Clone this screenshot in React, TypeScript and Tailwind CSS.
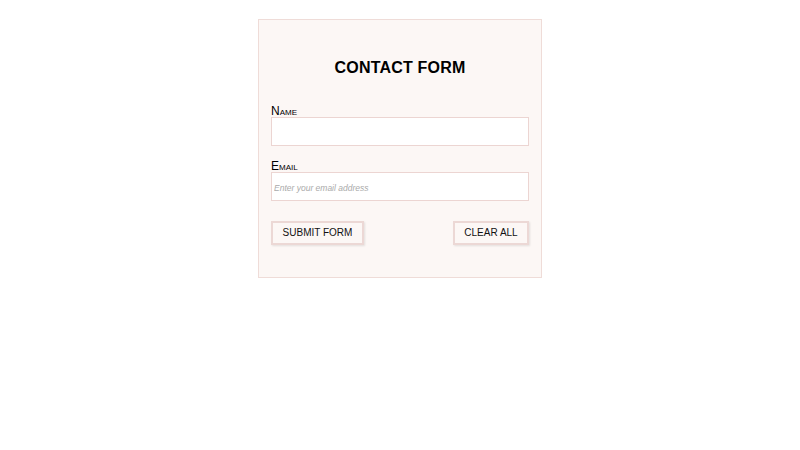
import React, { useState } from 'react';

const App: React.FC = () => {
  const [name, setName] = useState('');
  const [email, setEmail] = useState('');

  const clearAll = () => {
    setName('');
    setEmail('');
  };

  return (
    <div className="min-h-screen w-full bg-white pt-[19px] font-['Liberation_Sans',Arial,sans-serif] text-black">
      <form
        className="mx-auto w-[284px] border border-[#efdcd8] bg-[#fcf7f5] px-[12px] pt-[38px] pb-[32px]"
        onSubmit={(e) => e.preventDefault()}
      >
        {/* Header */}
        <h2 className="text-center text-[16px] leading-[20px] font-bold tracking-[0.2px]">CONTACT FORM</h2>

        {/* Fields */}
        <label className="mt-[26px] block h-[13px] text-[12px] leading-[15px] [font-variant:small-caps]">Name</label>
        <input
          autoFocus
          value={name}
          onChange={(e) => setName(e.target.value)}
          className="block h-[29px] w-full border border-[#ecd5d2] bg-white px-[2px] text-[12px] outline-none"
        />

        <label className="mt-[13px] block h-[13px] text-[12px] leading-[15px] [font-variant:small-caps]">Email</label>
        <input
          type="email"
          value={email}
          onChange={(e) => setEmail(e.target.value)}
          placeholder="Enter your email address"
          className="block h-[29px] w-full border border-[#ecd5d2] bg-white px-[2px] text-[12px] outline-none placeholder:text-[8.5px] placeholder:italic placeholder:text-[#aaaaaa]"
        />

        {/* Actions */}
        <div className="mt-[20px] flex items-center justify-between">
          <button
            type="submit"
            className="h-[24px] w-[93px] border-2 border-[#ecd8d5] bg-[#fcf7f5] text-[10px] leading-none text-[#111] shadow-[1px_1px_2px_rgba(0,0,0,0.1)]"
          >
            SUBMIT FORM
          </button>
          <button
            type="button"
            onClick={clearAll}
            className="h-[24px] w-[76px] border-2 border-[#ecd8d5] bg-[#fcf7f5] text-[10px] leading-none text-[#111] shadow-[1px_1px_2px_rgba(0,0,0,0.1)]"
          >
            CLEAR ALL
          </button>
        </div>
      </form>
    </div>
  );
};

export default App;
